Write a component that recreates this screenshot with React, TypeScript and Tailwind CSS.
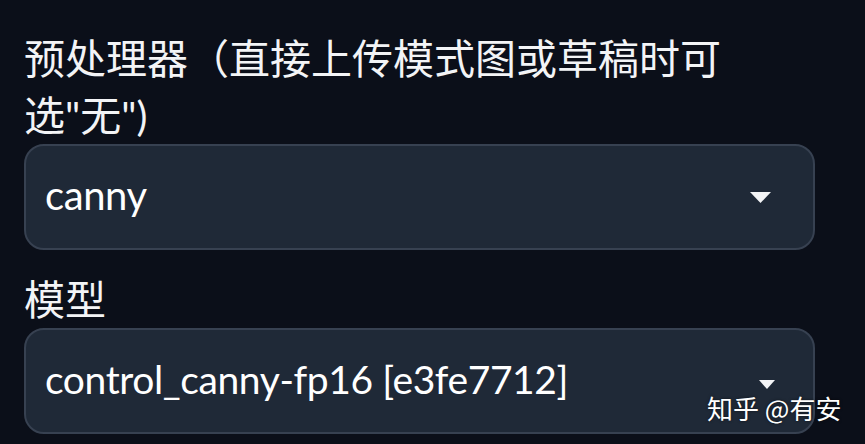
import React from 'react'

function Caret({ small }: { small?: boolean }) {
  return small ? (
    <svg width="16" height="9" viewBox="0 0 16 9" className="block">
      <path d="M0 0 L16 0 L8 9 Z" fill="#f3f4f6" />
    </svg>
  ) : (
    <svg width="21" height="11" viewBox="0 0 21 11" className="block">
      <path d="M0 0 L21 0 L10.5 11 Z" fill="#f3f4f6" />
    </svg>
  )
}

export default function App() {
  const font = { fontFamily: 'Lato, "Noto Sans CJK SC", sans-serif' }

  return (
    <div className="relative w-[865px] h-[444px] overflow-hidden bg-[#0b0f19]" style={font}>
      <div className="pt-[30px] pl-[24px] w-[815px]">
        {/* Preprocessor */}
        <div className="text-[41px] leading-[57px] text-[#f3f4f6] max-w-[715px]">
          预处理器（直接上传模式图或草稿时可选"无")
        </div>
        <div className="h-[106px] rounded-[20px] border-2 border-[#374151] bg-[#1f2937] flex items-center justify-between pl-[19px] pr-[42px]">
          <span className="text-[40px] tracking-[-0.4px] text-white leading-none pb-[4px]">canny</span>
          <Caret />
        </div>

        {/* Model */}
        <div className="mt-[21px] text-[41px] leading-[57px] text-[#f3f4f6]">模型</div>
        <div className="h-[106px] rounded-[20px] border-2 border-[#374151] bg-[#1f2937] flex items-center justify-between pl-[19px] pr-[38px]">
          <span className="text-[39px] tracking-[-0.4px] text-white leading-none pb-[4px]">control_canny-fp16 [e3fe7712]</span>
          <div className="pt-[6px]">
            <Caret small />
          </div>
        </div>
      </div>

      {/* Watermark */}
      <div
        className="absolute left-[707px] top-[395px] text-[26px] leading-none text-white"
        style={{ fontFamily: '"Noto Sans CJK SC", sans-serif', textShadow: '0 0 3px rgba(0,0,0,0.6)' }}
      >
        知乎 @有安
      </div>
    </div>
  )
}
